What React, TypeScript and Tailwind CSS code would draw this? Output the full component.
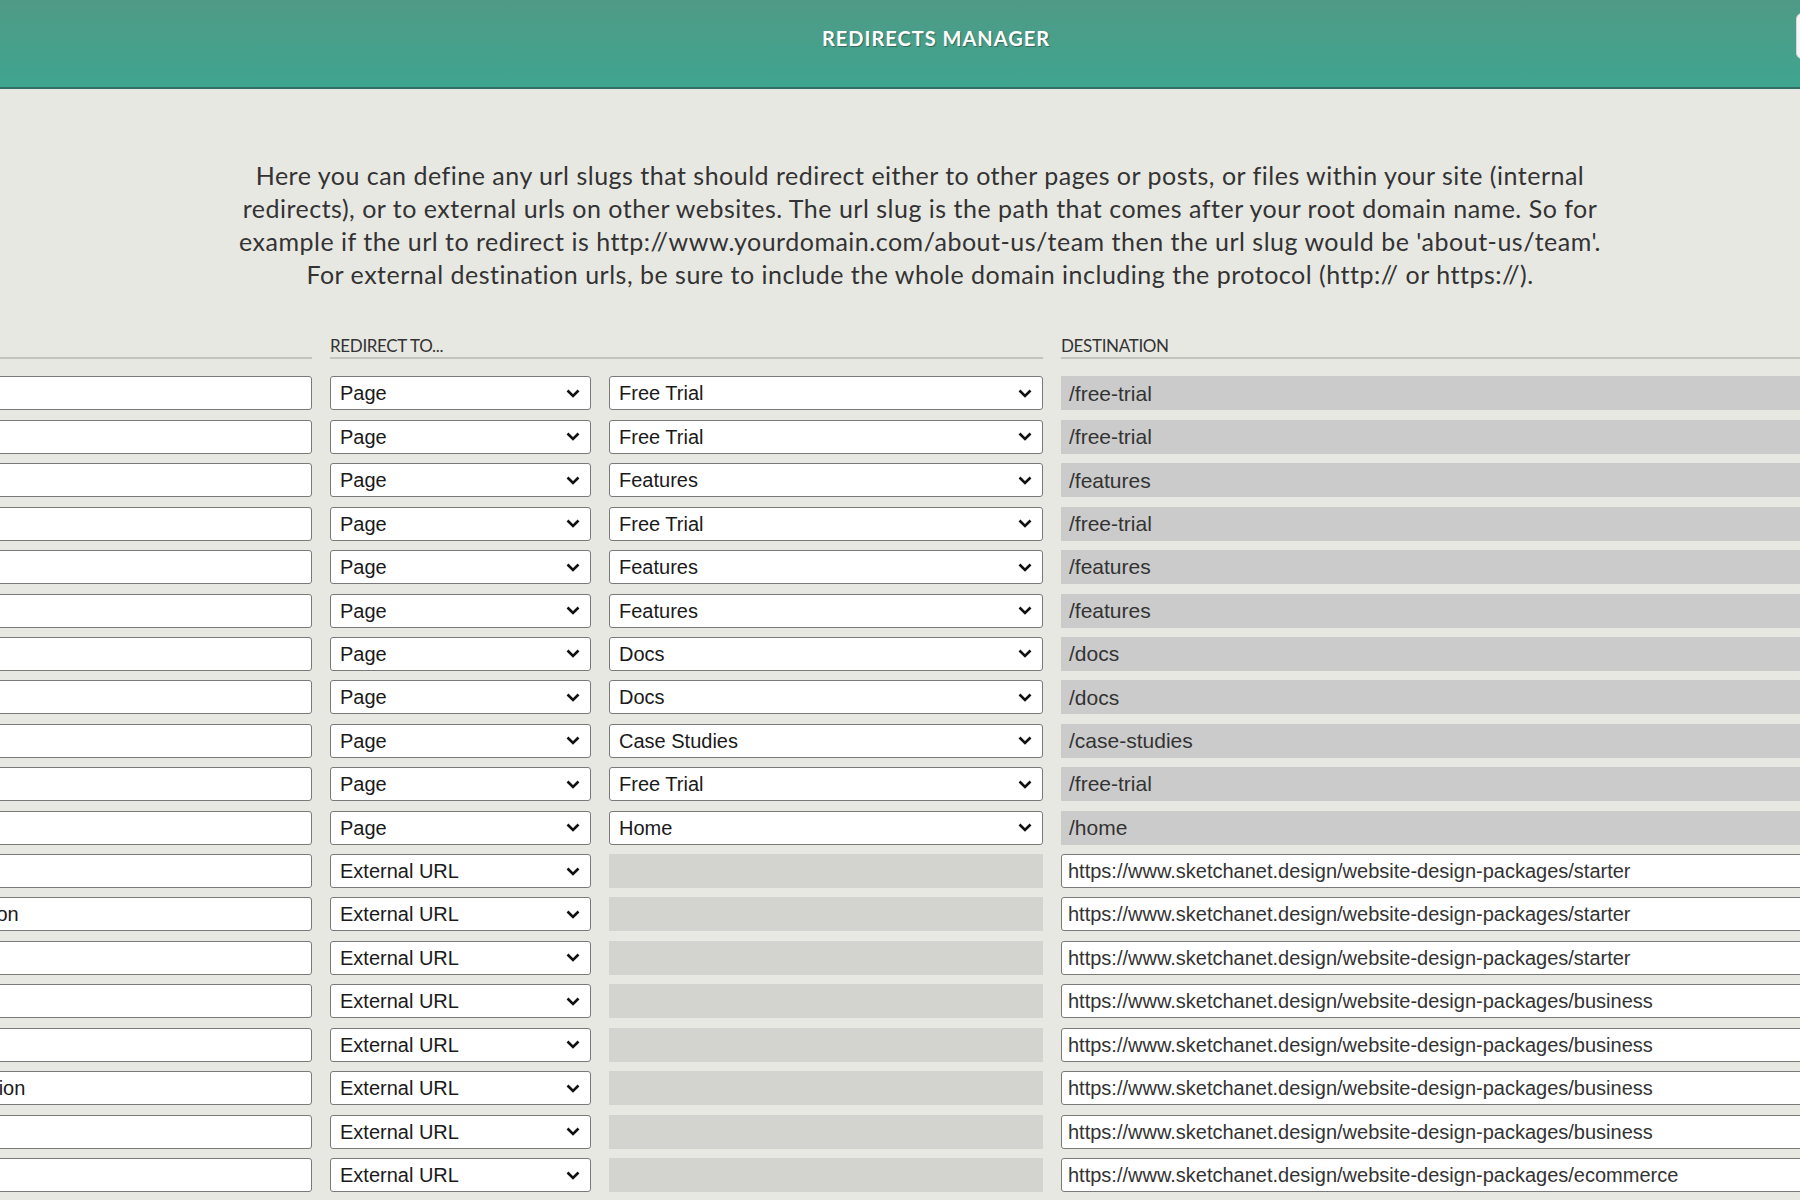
import React from "react";

interface Redirect {
  slug: string;
  kind: "Page" | "External URL";
  page?: string;
  destination: string;
}

const pkg = "https://www.sketchanet.design/website-design-packages/";

const redirects: Redirect[] = [
  { slug: "trial", kind: "Page", page: "Free Trial", destination: "/free-trial" },
  { slug: "free", kind: "Page", page: "Free Trial", destination: "/free-trial" },
  { slug: "tour", kind: "Page", page: "Features", destination: "/features" },
  { slug: "signup", kind: "Page", page: "Free Trial", destination: "/free-trial" },
  { slug: "what-we-do", kind: "Page", page: "Features", destination: "/features" },
  { slug: "services", kind: "Page", page: "Features", destination: "/features" },
  { slug: "help", kind: "Page", page: "Docs", destination: "/docs" },
  { slug: "support", kind: "Page", page: "Docs", destination: "/docs" },
  { slug: "portfolio", kind: "Page", page: "Case Studies", destination: "/case-studies" },
  { slug: "get-started", kind: "Page", page: "Free Trial", destination: "/free-trial" },
  { slug: "index", kind: "Page", page: "Home", destination: "/home" },
  { slug: "starter", kind: "External URL", destination: pkg + "starter" },
  { slug: "web-design-consultation", kind: "External URL", destination: pkg + "starter" },
  { slug: "basic", kind: "External URL", destination: pkg + "starter" },
  { slug: "business", kind: "External URL", destination: pkg + "business" },
  { slug: "pro", kind: "External URL", destination: pkg + "business" },
  { slug: "shop-design-consultation", kind: "External URL", destination: pkg + "business" },
  { slug: "agency", kind: "External URL", destination: pkg + "business" },
  { slug: "shop", kind: "External URL", destination: pkg + "ecommerce" },
];

function Chevron() {
  return (
    <svg width="14" height="9" viewBox="0 0 14 9" className="shrink-0">
      <path d="M1.5 1.5 L7 7 L12.5 1.5" fill="none" stroke="#111" strokeWidth="2.6" />
    </svg>
  );
}

function FakeSelect({ value }: { value: string }) {
  return (
    <div className="h-[34px] flex items-center justify-between bg-white border border-[#7a7a7a] rounded-[3px] pl-[9px] pr-[10px] text-[20px] text-[#1a1a1a]">
      <span>{value}</span>
      <Chevron />
    </div>
  );
}

function App() {
  return (
    <div className="w-full h-screen overflow-hidden bg-[#e8e8e3] font-['Lato',sans-serif]">
      <header className="h-[89px] flex items-center overflow-hidden bg-linear-to-b from-[#4f9a86] to-[#3ea58f] border-b-2 border-[#336e63]">
        <div className="flex-1" />
        <h1 className="ml-[72px] -mt-[12px] text-white font-bold text-[20px] tracking-[0.05em] [text-shadow:1px_1px_1px_rgba(0,0,0,0.35)]">
          REDIRECTS MANAGER
        </h1>
        <div className="flex-1 flex justify-end">
          <div className="w-[60px] h-[46px] -mt-[16px] -mr-[56px] bg-[#f6f6f6] border border-[#cfd8d4] rounded-[6px]" />
        </div>
      </header>

      <p className="mt-[70px] pl-[40px] text-center text-[25px] leading-[33px] tracking-[0.02em] text-[#333] whitespace-nowrap">
        Here you can define any url slugs that should redirect either to other pages or posts, or files within your site (internal
        <br />
        redirects), or to external urls on other websites. The url slug is the path that comes after your root domain name. So for
        <br />
        example if the url to redirect is http://www.yourdomain.com/about-us/team then the url slug would be 'about-us/team'.
        <br />
        For external destination urls, be sure to include the whole domain including the protocol (http:// or https://).
      </p>

      <div className="-ml-[206px] mt-[45px] w-[2200px] grid grid-cols-[518px_261px_434px_900px] items-start gap-x-[18px] gap-y-[9.43px]">
        <div className="mb-[8px] text-[17px] leading-[20px] text-[#333] pb-[1px] border-b-2 border-[#c4c4bc]">URL SLUG</div>
        <div className="mb-[8px] col-span-2 text-[17px] leading-[20px] text-[#333] tracking-[-0.02em] pb-[1px] border-b-2 border-[#c4c4bc]">
          REDIRECT TO...
        </div>
        <div className="mb-[8px] text-[17px] leading-[20px] text-[#333] tracking-[-0.02em] pb-[1px] border-b-2 border-[#c4c4bc]">
          DESTINATION
        </div>

        {redirects.map((r, i) => (
          <React.Fragment key={i}>
            <div className="h-[34px] flex items-center bg-white border border-[#7a7a7a] rounded-[3px] px-[8px] text-[20px] text-[#1a1a1a] font-['Liberation_Sans',Arial,sans-serif] whitespace-nowrap overflow-hidden">
              {r.slug}
            </div>
            <div className="font-['Liberation_Sans',Arial,sans-serif]">
              <FakeSelect value={r.kind} />
            </div>
            <div className="font-['Liberation_Sans',Arial,sans-serif]">
              {r.page ? <FakeSelect value={r.page} /> : <div className="h-[34px] bg-[#d3d3cf]" />}
            </div>
            {r.kind === "Page" ? (
              <div className="h-[34px] flex items-center bg-[#cbcbcb] px-[8px] text-[21px] text-[#333] font-['Liberation_Sans',Arial,sans-serif]">
                {r.destination}
              </div>
            ) : (
              <div className="h-[34px] flex items-center bg-white border border-[#7a7a7a] rounded-[3px] px-[6px] text-[20px] text-[#333] font-['Liberation_Sans',Arial,sans-serif] whitespace-nowrap">
                {r.destination}
              </div>
            )}
          </React.Fragment>
        ))}
      </div>
    </div>
  );
}

export default App;
